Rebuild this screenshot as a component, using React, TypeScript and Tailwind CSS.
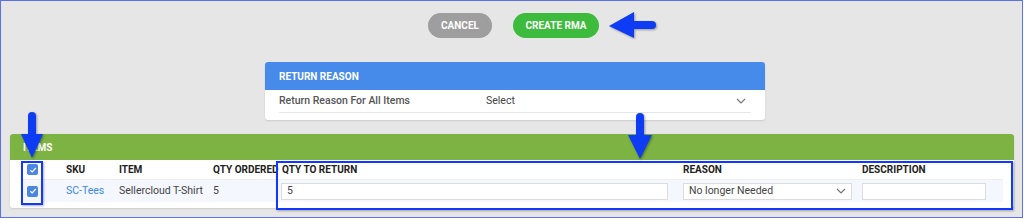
import React from "react";

const font = { fontFamily: "Roboto, 'Noto Sans', Arial, sans-serif" };

function Check() {
  return (
    <span className="flex h-[11px] w-[11px] items-center justify-center rounded-[2px] bg-[#4a86e2]">
      <svg width="8" height="8" viewBox="0 0 8 8">
        <path d="M1.3 4.2 L3.2 6 L6.8 2" fill="none" stroke="#fff" strokeWidth="1.2" />
      </svg>
    </span>
  );
}

function Chevron() {
  return (
    <svg width="10" height="6" viewBox="0 0 10 6">
      <path d="M1 1 L5 5 L9 1" fill="none" stroke="#777" strokeWidth="1.2" />
    </svg>
  );
}

function DownArrow({ w }: { w: number }) {
  const mid = w / 2;
  return (
    <svg width={w} height="46" viewBox={`0 0 ${w} 46`} style={{ filter: "drop-shadow(1px 1px 1px rgba(0,0,0,0.35))" }}>
      <rect x={mid - 4} y="0" width="8" height="26" rx="4" fill="#0d3cf4" />
      <polygon points={`0,22 ${w},22 ${mid},46`} fill="#0d3cf4" />
    </svg>
  );
}

export default function App() {
  return (
    <div style={font} className="relative box-border h-[218px] w-[1023px] border border-[#5a72f0] bg-[#e6e6e6]">
      {/* action buttons */}
      <div className="flex gap-[21px] pl-[427px] pt-[12px]">
        <button className="h-[25px] w-[64px] rounded-full bg-[#9e9e9e] text-[10px] font-bold text-white">CANCEL</button>
        <button className="h-[25px] w-[86px] rounded-full bg-[#3cbb3c] text-[10px] font-bold text-white">CREATE RMA</button>
      </div>

      {/* return reason card */}
      <div className="ml-[264px] mt-[24px] h-[58px] w-[500px] rounded-[3px] bg-white shadow-[0_1px_2px_rgba(0,0,0,0.12)]">
        <div className="flex h-[28px] items-center rounded-t-[3px] bg-[#468be9] px-[14px] text-[10px] font-bold text-white">
          RETURN REASON
        </div>
        <div className="mx-[14px] flex h-[23px] items-center border-b border-[#e6e6e6] pr-[5px] text-[10.5px]">
          <span className="w-[207px] font-medium text-[#555]">Return Reason For All Items</span>
          <span className="flex-1 text-[#444]">Select</span>
          <Chevron />
        </div>
      </div>

      {/* items panel */}
      <div className="ml-[9px] mt-[14px] w-[1004px] rounded-[3px] bg-white pb-[6px] shadow-[0_1px_2px_rgba(0,0,0,0.12)]">
        <div className="flex h-[26px] items-center rounded-t-[3px] bg-[#7cb342] px-[13px] text-[10px] font-bold text-white">
          ITEMS
        </div>
        <div className="px-[11px]">
          <div className="grid h-[20px] grid-cols-[45px_53px_94px_68px_402px_179px_135px] items-center border-b border-[#eeeeee] text-[10px] font-bold text-[#222]">
            <div className="pl-[6px]"><Check /></div>
            <div>SKU</div>
            <div>ITEM</div>
            <div className="whitespace-nowrap">QTY ORDERED</div>
            <div className="pl-[1px]">QTY TO RETURN</div>
            <div>REASON</div>
            <div>DESCRIPTION</div>
          </div>
          <div className="grid h-[22px] grid-cols-[45px_53px_94px_68px_402px_179px_135px] items-center bg-[#f4f7fd] text-[10.5px] text-[#444]">
            <div className="pl-[6px]"><Check /></div>
            <div className="text-[#3b86e6]">SC-Tees</div>
            <div className="whitespace-nowrap">Sellercloud T-Shirt</div>
            <div>5</div>
            <div>
              <div className="flex h-[17px] w-[387px] items-center border border-[#dcdcdc] bg-white pl-[5px]">5</div>
            </div>
            <div>
              <div className="flex h-[17px] w-[169px] items-center justify-between border border-[#dcdcdc] bg-white pl-[5px] pr-[5px]">
                <span>No longer Needed</span>
                <Chevron />
              </div>
            </div>
            <div>
              <div className="h-[17px] w-[124px] border border-[#dcdcdc] bg-white" />
            </div>
          </div>
        </div>
      </div>

      {/* annotations */}
      <div className="absolute left-[608px] top-[11px]">
        <svg width="48" height="27" viewBox="0 0 48 27" style={{ filter: "drop-shadow(1px 1px 1px rgba(0,0,0,0.35))" }}>
          <polygon points="0,14 25,0 25,26" fill="#0d3cf4" />
          <rect x="20" y="9" width="27" height="8" rx="4" fill="#0d3cf4" />
        </svg>
      </div>
      <div className="absolute left-[20px] top-[111px]"><DownArrow w={22} /></div>
      <div className="absolute left-[627px] top-[112px]"><DownArrow w={24} /></div>
      <div className="absolute left-[20px] top-[160px] h-[44px] w-[22px] border-2 border-[#1238ff] shadow-[1px_1px_2px_rgba(0,0,0,0.3)]" />
      <div className="absolute left-[275px] top-[160px] h-[49px] w-[737px] border-2 border-[#1238ff] shadow-[1px_1px_2px_rgba(0,0,0,0.3)]" />
    </div>
  );
}
